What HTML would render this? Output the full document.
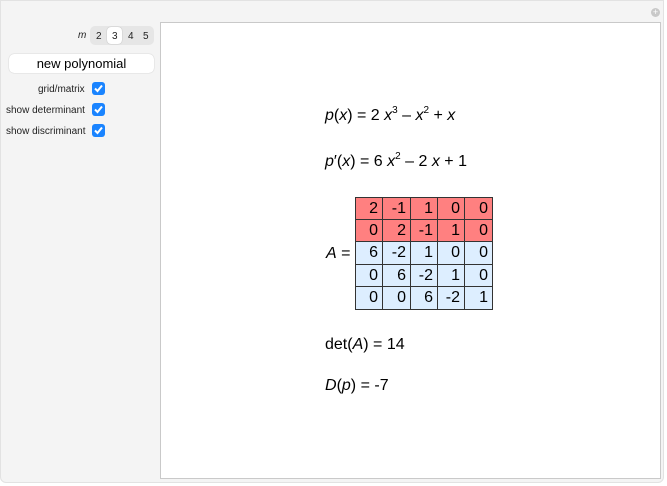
<!DOCTYPE html>
<html><head><style>
body{margin:0;width:667px;height:486px;background:#fff;font-family:"Liberation Sans",sans-serif;position:relative;overflow:hidden}
.card{position:absolute;left:0;top:0;width:664px;height:483px;background:#f4f4f4;border:1px solid #e2e2e2;border-radius:0 0 6px 6px;box-sizing:border-box}
.panel{position:absolute;left:160px;top:22px;width:501px;height:457px;background:#fff;border:1px solid #c9c9c9;box-sizing:border-box}
.t{position:absolute;font-size:16px;color:#000;white-space:nowrap}
.s{position:absolute;font-size:10px;color:#222;white-space:nowrap}
.cb{position:absolute;width:13px;height:13px;background:#1a84ff;border-radius:3px}
.cb svg{position:absolute;left:0;top:0}
.m{position:absolute;left:355px;top:197px;width:138px;height:113px}
.c{position:absolute;box-sizing:border-box;text-align:right;padding-right:4px;font-size:16px;line-height:23px}
sup{font-size:10px;vertical-align:7px;line-height:0}
i{font-style:italic}
</style></head><body>
<div class="card"></div>
<div class="panel"></div>
<div style="position:absolute;left:651px;top:8px;width:9px;height:9px;border-radius:50%;background:#c8c8c8;color:#fff;font-size:9px;line-height:9px;text-align:center">+</div>
<div class="s" style="left:78px;top:30px;font-style:italic">m</div>
<div style="position:absolute;left:90px;top:26px;width:64px;height:19px;background:#e6e6e6;border-radius:5px"></div>
<div style="position:absolute;left:107px;top:27px;width:15px;height:17px;background:#fff;border-radius:4px;box-shadow:0 0 1px #999"></div>
<div class="s" style="left:96px;top:31px">2</div>
<div class="s" style="left:112px;top:31px">3</div>
<div class="s" style="left:128px;top:31px">4</div>
<div class="s" style="left:143px;top:31px">5</div>
<div style="position:absolute;left:9px;top:54px;width:145px;height:19px;background:#fff;border-radius:5px;box-shadow:0 0 1px #aaa;text-align:center;font-size:13px;line-height:19px">new polynomial</div>
<div class="s" style="left:38px;top:84px">grid/matrix</div>
<div class="s" style="left:6px;top:105px">show determinant</div>
<div class="s" style="left:6px;top:126px">show discriminant</div>
<div class="cb" style="left:92px;top:82px"><svg width="13" height="13"><path d="M3 6.5 L5.5 9 L10 3.5" stroke="#fff" stroke-width="2" fill="none"/></svg></div>
<div class="cb" style="left:92px;top:103px"><svg width="13" height="13"><path d="M3 6.5 L5.5 9 L10 3.5" stroke="#fff" stroke-width="2" fill="none"/></svg></div>
<div class="cb" style="left:92px;top:124px"><svg width="13" height="13"><path d="M3 6.5 L5.5 9 L10 3.5" stroke="#fff" stroke-width="2" fill="none"/></svg></div>
<div class="t" style="left:325px;top:107px"><i>p</i>(<i>x</i>) = 2 <i>x</i><sup>3</sup> – <i>x</i><sup>2</sup> + <i>x</i></div>
<div class="t" style="left:325px;top:153px"><i>p</i>′(<i>x</i>) = 6 <i>x</i><sup>2</sup> – 2 <i>x</i> + 1</div>
<div class="t" style="left:326px;top:245px"><i>A</i> =</div>
<div style="position:absolute;left:355px;top:197px;width:138px;height:45px;background:#ff8080"></div>
<div style="position:absolute;left:355px;top:242px;width:138px;height:68px;background:#ddeeff"></div>
<div class="m" id="m"></div>
<svg style="position:absolute;left:0;top:0" width="667" height="486">
<g stroke="#333" stroke-width="1" fill="none">
<path d="M355.5 197V310M382.5 197V310M410.5 197V310M437.5 197V310M464.5 197V310M492.5 197V310"/>
<path d="M355 197.5H493M355 219.5H493M355 241.5H493M355 264.5H493M355 286.5H493M355 309.5H493"/>
</g></svg>
<script>
var d=[[2,-1,1,0,0],[0,2,-1,1,0],[6,-2,1,0,0],[0,6,-2,1,0],[0,0,6,-2,1]],h='';
var xs=[0,27,55,82,109,137],ys=[0,22,44,67,89,112];
for(var r=0;r<5;r++)for(var c=0;c<5;c++){h+='<div class="c" style="left:'+xs[c]+'px;top:'+ys[r]+'px;width:'+(xs[c+1]-xs[c])+'px;height:'+(ys[r+1]-ys[r])+'px">'+d[r][c]+'</div>';}
document.getElementById('m').innerHTML=h;
</script>
<div class="t" style="left:325px;top:336px">det(<i>A</i>) = 14</div>
<div class="t" style="left:325px;top:377px"><i>D</i>(<i>p</i>) = -7</div>
</body></html>
